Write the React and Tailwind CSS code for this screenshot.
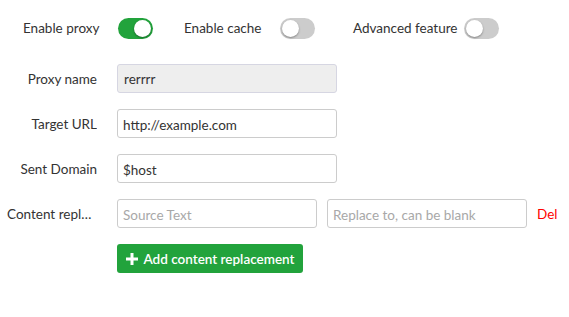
import React from "react";

function Toggle({ on }) {
  return (
    <div
      className={
        "relative h-[21px] w-[35px] rounded-full " +
        (on ? "bg-[#22a33c]" : "bg-[#cccccc]")
      }
    >
      <div
        className={
          "absolute top-[2px] h-[17px] w-[17px] rounded-full bg-white shadow-[0_1px_2px_rgba(0,0,0,0.35)] " +
          (on ? "left-[16px]" : "left-[2px]")
        }
      />
    </div>
  );
}

function Row({ label, children }) {
  return (
    <div className="flex items-center h-[29px]">
      <div className="w-[90px] shrink-0 pt-[2px] text-right truncate text-[13.5px] text-[#333]">{label}</div>
      <div className="ml-[20px] flex items-center">{children}</div>
    </div>
  );
}

export default function App() {
  return (
    <div
      className="w-[569px] h-[317px] overflow-hidden bg-white text-[#333]"
      style={{ fontFamily: 'Lato, "Noto Sans", sans-serif' }}
    >
      <div className="pl-[7px]">
        <div className="flex items-center h-[21px] mt-[18px] pl-[16px] text-[13.5px]">
          <span className="w-[74px] whitespace-nowrap">Enable proxy</span>
          <div className="ml-[21px]"><Toggle on /></div>
          <span className="ml-[31px] w-[74px] whitespace-nowrap">Enable cache</span>
          <div className="ml-[22px]"><Toggle /></div>
          <span className="ml-[38px] w-[100px] whitespace-nowrap">Advanced feature</span>
          <div className="ml-[11px]"><Toggle /></div>
        </div>
        <div className="mt-[25px] flex flex-col gap-[16px]">
          <Row label="Proxy name">
            <div className="w-[220px] h-[29px] rounded-[3px] border border-[#d6d6e2] bg-[#eeeeee] px-[6px] pt-[2px] flex items-center text-[13.5px] text-[#333]">
              rerrrr
            </div>
          </Row>
          <Row label="Target URL">
            <input
              readOnly
              value="http://example.com"
              className="w-[220px] h-[29px] rounded-[3px] border border-[#cccccc] px-[5px] pt-[2px] text-[13.5px] text-[#333] outline-none"
            />
          </Row>
          <Row label="Sent Domain">
            <input
              readOnly
              value="$host"
              className="w-[220px] h-[29px] rounded-[3px] border border-[#cccccc] px-[5px] pt-[2px] text-[13.5px] text-[#333] outline-none"
            />
          </Row>
          <Row label="Content replacement">
            <input
              readOnly
              placeholder="Source Text"
              className="w-[200px] h-[29px] rounded-[3px] border border-[#cccccc] px-[5px] pt-[2px] text-[13.5px] text-[#333] placeholder:text-[#a8a8a8] outline-none"
            />
            <input
              readOnly
              placeholder="Replace to, can be blank"
              className="ml-[10px] w-[200px] h-[29px] rounded-[3px] border border-[#cccccc] px-[5px] pt-[2px] text-[13.5px] text-[#333] placeholder:text-[#a8a8a8] outline-none"
            />
            <span className="ml-[10px] pt-[2px] text-[13.5px] text-[#ff0000]">Del</span>
          </Row>
          <Row label="">
            <button className="h-[29px] w-[186px] rounded-[3px] bg-[#22a33c] text-white text-[13.5px] font-semibold flex items-center justify-center gap-[6px]">
              <svg width="12" height="12" viewBox="0 0 12 12">
                <path d="M4.5 0h3v4.5H12v3H7.5V12h-3V7.5H0v-3h4.5z" fill="white" />
              </svg>
              <span className="pt-[1px]">Add content replacement</span>
            </button>
          </Row>
        </div>
        <p className="mt-[39px] pl-[53px] whitespace-nowrap text-[13.5px] text-[#666]">
          Note: all replacements will be applied in order, the content of the response will be displayed as it is returned
        </p>
      </div>
    </div>
  );
}
